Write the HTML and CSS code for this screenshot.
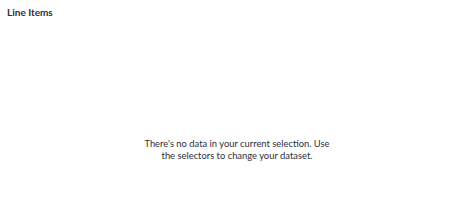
FILE: index.html
```html
<!DOCTYPE html>
<html>
<head>
  <title>Line Items</title>
  <link rel="stylesheet" href="styles.css">
</head>
<body>
  <div class="panel">
    <h3 class="panel-title">Line Items</h3>
    <div class="empty-state">
      <p class="empty-message">There's no data in your current selection. Use<br>the selectors to change your dataset.</p>
    </div>
  </div>
</body>
</html>
```

FILE: styles.css
```css
/* Panel with an empty-state message */
body {
  margin: 0;
  background-color: #ffffff;
  font-family: "Lato", "Open Sans", sans-serif;
  color: #2c2e3a;
}

.panel {
  height: 215px;
  display: flex;
  flex-direction: column;
  padding: 5px 7px 0;
  box-sizing: border-box;
}

.panel-title {
  margin: 0;
  font-size: 10px;
  font-weight: bold;
  line-height: 14px;
  color: #2c2e3a;
}

.empty-state {
  flex-grow: 1;
  display: flex;
  justify-content: center;
  padding-top: 119px;
}

.empty-message {
  margin: 0;
  font-size: 9.4px;
  line-height: 11.5px;
  text-align: center;
  color: #2c2e3a;
}
```
